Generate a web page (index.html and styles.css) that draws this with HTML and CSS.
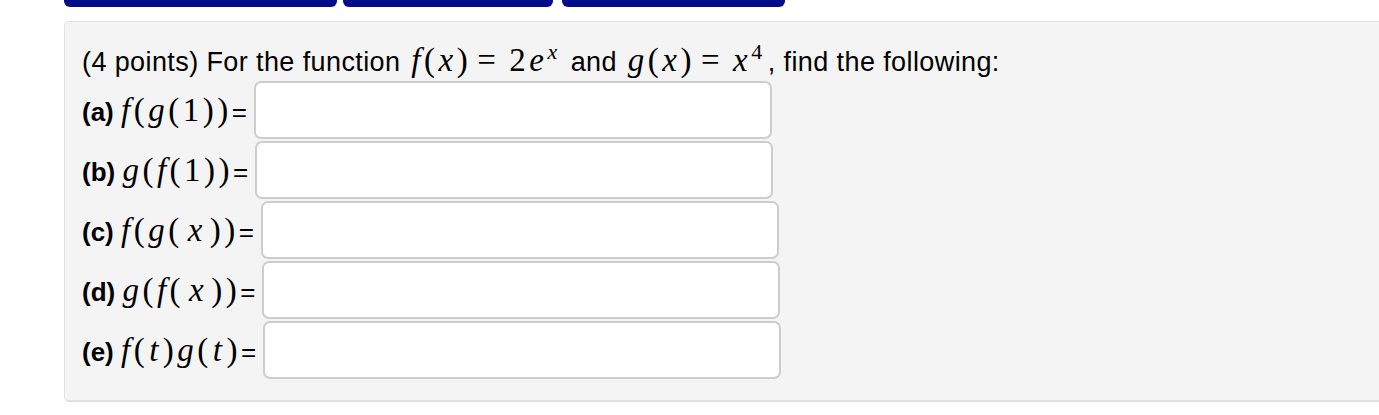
FILE: index.html
```html
<!DOCTYPE html>
<html>
<head>
<meta charset="utf-8">
<link rel="stylesheet" href="styles.css">
</head>
<body>
<div class="page">
  <div class="tabs">
    <div class="tab tab-1"></div>
    <div class="tab tab-2"></div>
    <div class="tab tab-3"></div>
  </div>
  <div class="panel">
    <p class="question">(4 points) For the function <span class="math"><i>f</i>(<i>x</i>)<span class="eq">=</span>2<i>e</i><sup><i>x</i></sup></span> and <span class="math"><i>g</i>(<i>x</i>)<span class="eq">=</span><i>x</i><sup>4</sup></span>, find the following:</p>
    <div class="row">
      <span class="label"><b>(a)</b> <span class="math"><i>f</i>(<i>g</i>(1))</span>=</span>
      <input class="answer" type="text">
    </div>
    <div class="row">
      <span class="label"><b>(b)</b> <span class="math"><i>g</i>(<i>f</i>(1))</span>=</span>
      <input class="answer" type="text">
    </div>
    <div class="row">
      <span class="label"><b>(c)</b> <span class="math"><i>f</i>(<i>g</i>(<i class="wide">x</i>))</span>=</span>
      <input class="answer" type="text">
    </div>
    <div class="row">
      <span class="label"><b>(d)</b> <span class="math"><i>g</i>(<i>f</i>(<i class="wide">x</i>))</span>=</span>
      <input class="answer" type="text">
    </div>
    <div class="row">
      <span class="label"><b>(e)</b> <span class="math"><i>f</i>(<i class="narrow">t</i>)<i>g</i>(<i class="narrow">t</i>)</span>=</span>
      <input class="answer" type="text">
    </div>
  </div>
</div>
</body>
</html>
```

FILE: styles.css
```css
html, body {
  margin: 0;
  padding: 0;
  background: #ffffff;
}

body {
  font-family: "Liberation Sans", Arial, Helvetica, sans-serif;
  color: #000;
  overflow: hidden;
}

.page {
  padding-left: 64px;
}

.tabs {
  display: flex;
  height: 7px;
}

.tab {
  background: #000c8a;
  border-radius: 0 0 6px 6px;
  height: 7px;
}

.tab-1 { width: 273px; }
.tab-2 { width: 210px; margin-left: 6px; }
.tab-3 { width: 223px; margin-left: 9px; }

.panel {
  margin-top: 14px;
  background: #f4f4f4;
  border: 1px solid #e2e2e2;
  border-right: none;
  border-bottom: 2px solid #e0e0e0;
  border-radius: 5px 0 0 5px;
  padding: 20px 17px 20px 17px;
}

.question {
  margin: 0;
  font-size: 27px;
  letter-spacing: 0.4px;
  line-height: 36px;
  white-space: nowrap;
}

.question .math {
  margin: 0 2px 0 3px;
}

.math {
  font-family: "Liberation Serif", "Times New Roman", serif;
  font-size: 33px;
  letter-spacing: 3.5px;
}

.math i {
  font-style: italic;
}

.math i.wide {
  margin: 0 4px 0 5px;
}

.math i.narrow {
  margin: 0 1px 0 1px;
}

.math .eq {
  margin: 0 10px 0 6px;
}

.math sup {
  font-size: 22px;
  vertical-align: 12px;
  line-height: 0;
}

.row {
  display: flex;
  align-items: center;
  height: 60px;
  font-size: 26px;
}

.label {
  white-space: nowrap;
}

.label b {
  font-weight: bold;
}

.answer {
  margin-left: 7px;
  width: 518px;
  height: 58px;
  box-sizing: border-box;
  border: 2px solid #cdcdcd;
  border-radius: 7px;
  background: #ffffff;
  padding: 0 8px;
  font-size: 18px;
  outline: none;
}
```
